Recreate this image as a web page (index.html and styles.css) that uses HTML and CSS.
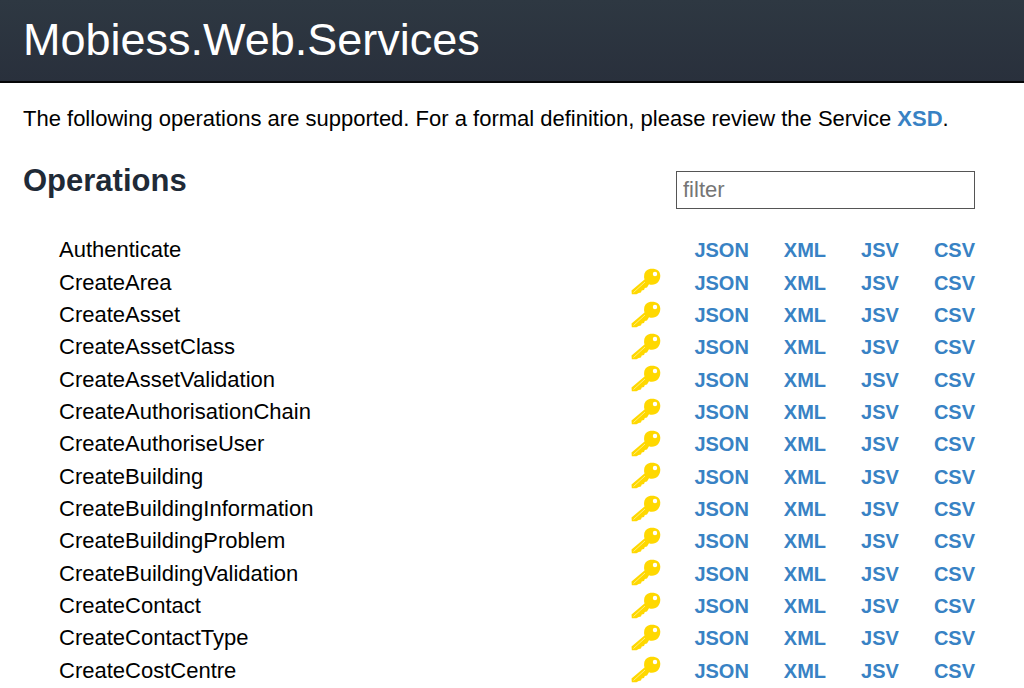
FILE: index.html
```html
<!DOCTYPE html>
<html lang="en">
<head>
    <meta charset="UTF-8">
    <meta name="viewport" content="width=device-width, initial-scale=1.0">
    <title>Mobiess.Web.Services</title>
    <link rel="stylesheet" href="styles.css">
</head>
<body>

<!-- Key icon shared by the rows that need authentication -->
<svg class="sprite" width="0" height="0" aria-hidden="true">
    <symbol id="key" viewBox="0 -2 30 30">
        <path fill="#ffd800" fill-rule="evenodd" d="M13.2 7C13.8 3.300 16.500 0.800 21 0.800C26 0.800 29.300 3.300 29.300 7.800C29.300 12.800 26 16.800 21 16.800C19.800 16.800 18.800 16.600 18 16.200L16 19.500L13.800 20L13 22L10.700 22.600L10 24.500L7.700 25L5.500 26.300H0.800L0.500 22.600L13.500 11.500C13 10 12.900 8.600 13.200 7ZM24 3.800A2.200 2.200 0 1 0 24 8.200A2.200 2.200 0 1 0 24 3.800Z"/>
        <path fill="none" stroke="#ffee80" stroke-width="1" d="M2.500 24.500L14 14"/>
    </symbol>
</svg>

<header class="header">
    <h1>Mobiess.Web.Services</h1>
</header>

<main class="content">
    <p class="intro">The following operations are supported. For a formal definition, please review the Service <a href="#xsd">XSD</a>.</p>

    <div class="toolbar">
        <h2>Operations</h2>
        <input type="text" id="filter" class="filter" placeholder="filter" aria-label="filter">
    </div>

    <table class="operations">
        <tbody id="operations"></tbody>
    </table>
</main>

<script src="script.js"></script>
</body>
</html>
```
FILE: styles.css
```css
body {
    margin: 0;
    min-height: 100vh;
    display: flex;
    flex-direction: column;
    background: #fff;
    color: #000;
    font-family: "Liberation Sans", Arial, sans-serif;
    font-size: 22px;
}
.sprite {
    position: absolute;
}
a {
    color: #3882c4;
    font-weight: bold;
    text-decoration: none;
}
a:hover {
    text-decoration: underline;
}
.header {
    padding: 14px 23px 16px;
    background: linear-gradient(#2e3842, #29303c);
    border-bottom: 2px solid #050608;
}
.header h1 {
    margin: 0;
    color: #fff;
    font-size: 45px;
    font-weight: normal;
    line-height: 51px;
}
.content {
    flex: 1;
    display: flex;
    flex-direction: column;
    padding: 20px 49px 1px 23px;
}
.intro {
    margin: 0;
    line-height: 32px;
}
.toolbar {
    display: flex;
    justify-content: space-between;
    align-items: flex-start;
    padding: 28px 0 25px;
}
.toolbar h2 {
    margin: 0;
    color: #1f2a37;
    font-size: 31px;
    line-height: 36px;
}
.filter {
    box-sizing: border-box;
    width: 299px;
    height: 38px;
    margin-top: 8px;
    padding: 0 6px;
    border: 1px solid #555;
    font: inherit;
}
.filter::placeholder {
    color: #757575;
}
.operations {
    flex: 1;
    width: 100%;
    border-collapse: collapse;
}
.operations th,
.operations td {
    height: 32px;
    padding: 0;
    line-height: 24px;
    text-align: left;
    font-weight: normal;
}
.operations th {
    padding-left: 36px;
}
.operations td {
    width: 1px;
    padding-left: 35px;
    font-size: 20px;
}
.operations .auth {
    padding-left: 0;
    vertical-align: top;
}
.operations .auth + td {
    padding-left: 33px;
}
.key {
    display: block;
    width: 30px;
    height: 30px;
}
```
FILE: script.js
```javascript
const operations = [
    { name: 'Authenticate', auth: false },
    { name: 'CreateArea', auth: true },
    { name: 'CreateAsset', auth: true },
    { name: 'CreateAssetClass', auth: true },
    { name: 'CreateAssetValidation', auth: true },
    { name: 'CreateAuthorisationChain', auth: true },
    { name: 'CreateAuthoriseUser', auth: true },
    { name: 'CreateBuilding', auth: true },
    { name: 'CreateBuildingInformation', auth: true },
    { name: 'CreateBuildingProblem', auth: true },
    { name: 'CreateBuildingValidation', auth: true },
    { name: 'CreateContact', auth: true },
    { name: 'CreateContactType', auth: true },
    { name: 'CreateCostCentre', auth: true }
];
const formats = ['JSON', 'XML', 'JSV', 'CSV'];
const keyIcon = '<svg class="key" role="img" aria-label="Requires authentication"><use href="#key"/></svg>';

const tbody = document.getElementById('operations');
tbody.innerHTML = operations.map(op => `<tr>
    <th scope="row">${op.name}</th>
    <td class="auth">${op.auth ? keyIcon : ''}</td>
    ${formats.map(f => `<td><a href="#${f.toLowerCase()}-${op.name}">${f}</a></td>`).join('')}
</tr>`).join('');

document.getElementById('filter').addEventListener('input', e => {
    const query = e.target.value.toLowerCase();
    [...tbody.rows].forEach((row, i) => {
        row.hidden = !operations[i].name.toLowerCase().includes(query);
    });
});
```
